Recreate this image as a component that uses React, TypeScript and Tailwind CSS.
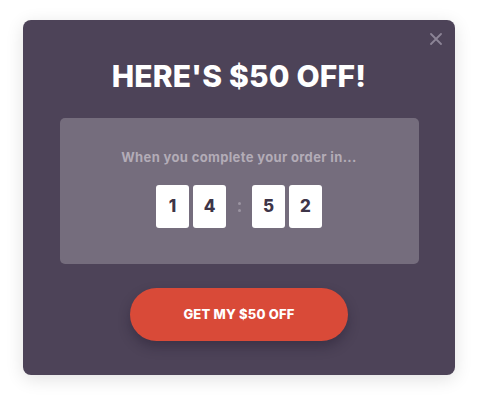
import React from "react";

const digits = ["1", "4", null, "5", "2"];

function DigitCard({ value }: { value: string }) {
  return (
    <div className="flex h-[43px] w-[33px] items-center justify-center rounded-[3px] bg-white text-[17px] font-extrabold text-[#3e3548]">
      {value}
    </div>
  );
}

export default function App() {
  return (
    <div
      className="min-h-[400px] w-[478px] bg-white pl-[23px] pt-[20px]"
      style={{ fontFamily: "Inter, 'Open Sans', sans-serif" }}
    >
      <div className="relative flex h-[355px] w-[432px] flex-col items-center rounded-[8px] bg-[#4d4358] shadow-[0_4px_18px_rgba(0,0,0,0.12)]">
        <button className="absolute right-[12px] top-[12px] flex h-[14px] w-[14px] items-center justify-center text-[#8c8496]">
          <svg width="12" height="12" viewBox="0 0 12 12" fill="none">
            <path d="M1 1L11 11M11 1L1 11" stroke="currentColor" strokeWidth="1.8" strokeLinecap="round" />
          </svg>
        </button>
        <h1 className="mt-[38px] text-[30px] font-extrabold leading-[36px] tracking-[0.2px] text-white">
          HERE'S $50 OFF!
        </h1>
        <div className="mt-[24px] flex h-[146px] w-[359px] flex-col items-center rounded-[5px] bg-[#756d7d]">
          <p className="mt-[30px] text-[13px] font-bold leading-[18px] tracking-[0.35px] text-[#b3acb7]">
            When you complete your order in...
          </p>
          <div className="mt-[19px] flex items-center">
            {digits.map((d, i) =>
              d === null ? (
                <div key={i} className="flex w-[26px] flex-col items-center gap-[4px]">
                  <span className="h-[3px] w-[3px] rounded-full bg-[#9c95a2]" />
                  <span className="h-[3px] w-[3px] rounded-full bg-[#9c95a2]" />
                </div>
              ) : (
                <div key={i} className={i === 1 || i === 4 ? "ml-[4px]" : ""}>
                  <DigitCard value={d} />
                </div>
              )
            )}
          </div>
        </div>
        <button className="mt-[24px] flex h-[53px] w-[218px] items-center justify-center rounded-full bg-[#d94a38] text-[13px] font-extrabold tracking-[0.2px] text-white shadow-[0_6px_12px_rgba(30,20,40,0.35)]">
          GET MY $50 OFF
        </button>
      </div>
    </div>
  );
}
